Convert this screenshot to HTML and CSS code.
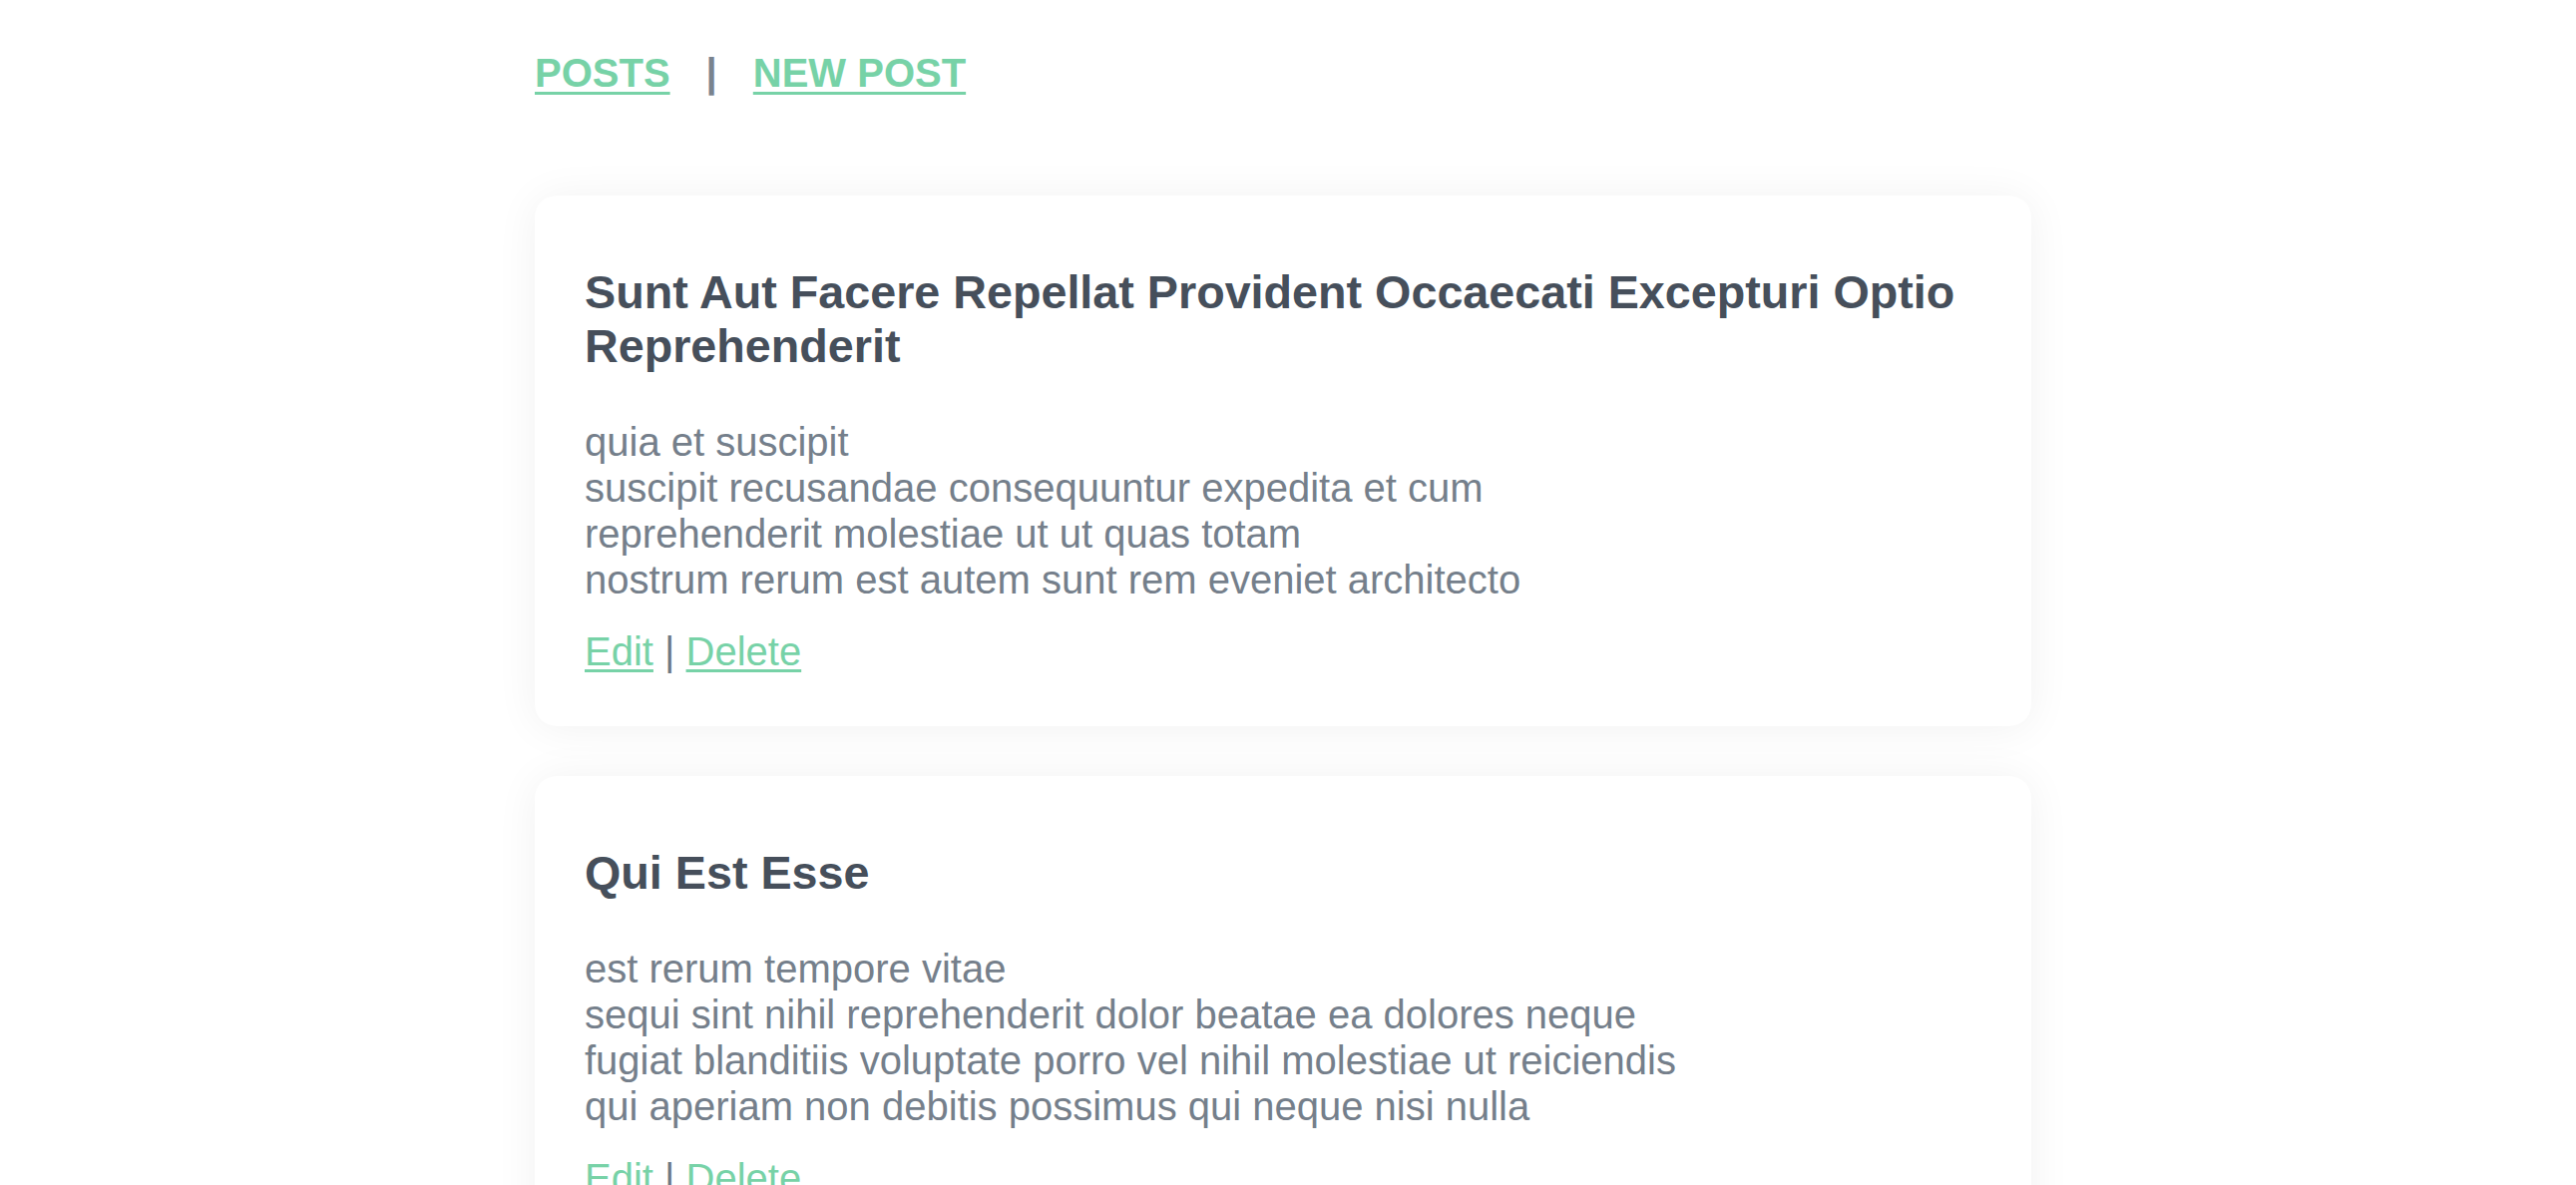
FILE: index.html
```html
<!DOCTYPE html>
<html lang="en">
<head>
<meta charset="utf-8">
<title>Posts</title>
<link rel="stylesheet" href="styles.css">
</head>
<body>
<div class="page">
  <nav class="nav">
    <a class="nav-link" href="#">POSTS</a>
    <span class="nav-sep">|</span>
    <a class="nav-link" href="#">NEW POST</a>
  </nav>
  <main class="posts">
    <article class="card">
      <h2 class="card-title">Sunt Aut Facere Repellat Provident Occaecati Excepturi Optio Reprehenderit</h2>
      <p class="card-body">quia et suscipit
suscipit recusandae consequuntur expedita et cum
reprehenderit molestiae ut ut quas totam
nostrum rerum est autem sunt rem eveniet architecto</p>
      <div class="card-actions"><a class="action" href="#">Edit</a> | <a class="action" href="#">Delete</a></div>
    </article>
    <article class="card">
      <h2 class="card-title">Qui Est Esse</h2>
      <p class="card-body">est rerum tempore vitae
sequi sint nihil reprehenderit dolor beatae ea dolores neque
fugiat blanditiis voluptate porro vel nihil molestiae ut reiciendis
qui aperiam non debitis possimus qui neque nisi nulla</p>
      <div class="card-actions"><a class="action" href="#">Edit</a> | <a class="action" href="#">Delete</a></div>
    </article>
    <article class="card">
      <h2 class="card-title">Ea Molestias Quasi Exercitationem Repellat Qui Ipsa Sit Aut</h2>
      <p class="card-body">et iusto sed quo iure
voluptatem occaecati omnis eligendi aut ad
voluptatem doloribus vel accusantium quis pariatur
molestiae porro eius odio et labore et velit aut</p>
      <div class="card-actions"><a class="action" href="#">Edit</a> | <a class="action" href="#">Delete</a></div>
    </article>
  </main>
</div>
</body>
</html>
```
FILE: styles.css
```css
html, body {
  margin: 0;
  padding: 0;
  background: #ffffff;
}

body {
  font-family: "Liberation Sans", Arial, Helvetica, sans-serif;
  color: #757f8b;
}

.page {
  width: 1510px;
  margin: 0 auto;
  padding-top: 50px;
}

.nav {
  display: flex;
  align-items: baseline;
  gap: 36px;
  font-size: 40px;
  font-weight: 700;
  line-height: 46px;
  height: 46px;
}

.nav-link {
  color: #77d2a7;
  text-decoration: underline;
  text-decoration-thickness: 3px;
  text-underline-offset: 5px;
}

.nav-sep {
  color: #7a838e;
}

.posts {
  display: flex;
  flex-direction: column;
  gap: 50px;
  margin-top: 100px;
  padding-bottom: 60px;
}

.card {
  width: 1500px;
  box-sizing: border-box;
  padding: 50px 50px 52px 50px;
  background: #ffffff;
  border-radius: 22px;
  box-shadow: 0 2px 44px rgba(0, 0, 0, 0.06);
}

.card-title {
  margin: 20px 0 46px;
  font-size: 46.7px;
  line-height: 54px;
  font-weight: 700;
  color: #464f5b;
}

.card-body {
  margin: 0;
  font-size: 40px;
  line-height: 46px;
  white-space: pre-line;
  color: #757f8b;
}

.card-actions {
  margin-top: 26px;
  font-size: 40px;
  line-height: 46px;
  color: #6f7985;
}

.action {
  color: #77d2a7;
  text-decoration: underline;
  text-decoration-thickness: 3px;
  text-underline-offset: 4px;
}
```
